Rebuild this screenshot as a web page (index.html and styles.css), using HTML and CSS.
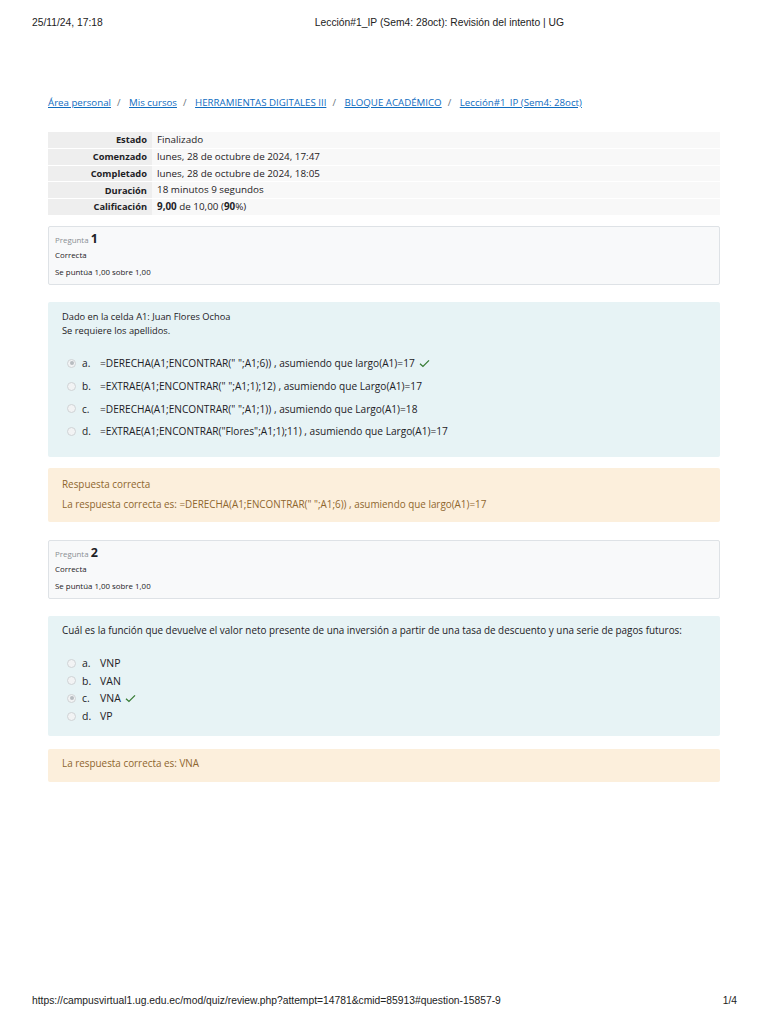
FILE: index.html
```html
<!DOCTYPE html>
<html>
<head>
  <title>Lección#1_IP (Sem4: 28oct): Revisión del intento | UG</title>
  <meta charset="UTF-8">
  <link rel="stylesheet" href="styles.css">
</head>
<body>
  <div class="page">
    <div class="print-header">
      <span>25/11/24, 17:18</span>
      <span class="print-title">Lección#1_IP (Sem4: 28oct): Revisión del intento | UG</span>
    </div>

    <div class="content">
      <nav class="breadcrumb">
        <a href="#">Área personal</a><span class="sep">/</span>
        <a href="#">Mis cursos</a><span class="sep">/</span>
        <a href="#">HERRAMIENTAS DIGITALES III</a><span class="sep">/</span>
        <a href="#">BLOQUE ACADÉMICO</a><span class="sep">/</span>
        <a href="#">Lección#1_IP (Sem4: 28oct)</a>
      </nav>

      <table class="summary">
        <tr><th>Estado</th><td>Finalizado</td></tr>
        <tr><th>Comenzado</th><td>lunes, 28 de octubre de 2024, 17:47</td></tr>
        <tr><th>Completado</th><td>lunes, 28 de octubre de 2024, 18:05</td></tr>
        <tr><th>Duración</th><td>18 minutos 9 segundos</td></tr>
        <tr><th>Calificación</th><td><b>9,00</b> de 10,00 (<b>90</b>%)</td></tr>
      </table>

      <div class="que-info">
        <div class="que-no">Pregunta <span class="qno">1</span></div>
        <div>Correcta</div>
        <div>Se puntúa 1,00 sobre 1,00</div>
      </div>

      <div class="formulation first">
        <p class="qtext">Dado en la celda A1: Juan Flores Ochoa<br>Se requiere los apellidos.</p>
        <div class="answers wide">
          <div class="answer">
            <span class="radio checked"></span><span class="letter">a.</span>
            <span>=DERECHA(A1;ENCONTRAR(" ";A1;6)) , asumiendo que largo(A1)=17</span>
            <svg class="tick" viewBox="0 0 12 10" width="11" height="9"><path d="M1 5.2 L4.3 8.3 L11 1.5" fill="none" stroke="#357a32" stroke-width="1.4"/></svg>
          </div>
          <div class="answer">
            <span class="radio"></span><span class="letter">b.</span>
            <span>=EXTRAE(A1;ENCONTRAR(" ";A1;1);12) , asumiendo que Largo(A1)=17</span>
          </div>
          <div class="answer">
            <span class="radio"></span><span class="letter">c.</span>
            <span>=DERECHA(A1;ENCONTRAR(" ";A1;1)) , asumiendo que Largo(A1)=18</span>
          </div>
          <div class="answer">
            <span class="radio"></span><span class="letter">d.</span>
            <span>=EXTRAE(A1;ENCONTRAR("Flores";A1;1);11) , asumiendo que Largo(A1)=17</span>
          </div>
        </div>
      </div>

      <div class="outcome first">
        <div class="feedback-title">Respuesta correcta</div>
        <div>La respuesta correcta es: =DERECHA(A1;ENCONTRAR(" ";A1;6)) , asumiendo que largo(A1)=17</div>
      </div>

      <div class="que-info second">
        <div class="que-no">Pregunta <span class="qno">2</span></div>
        <div>Correcta</div>
        <div>Se puntúa 1,00 sobre 1,00</div>
      </div>

      <div class="formulation short">
        <p class="qtext">Cuál es la función que devuelve el valor neto presente de una inversión a partir de una tasa de descuento y una serie de pagos futuros:</p>
        <div class="answers">
          <div class="answer"><span class="radio"></span><span class="letter">a.</span><span>VNP</span></div>
          <div class="answer"><span class="radio"></span><span class="letter">b.</span><span>VAN</span></div>
          <div class="answer">
            <span class="radio checked"></span><span class="letter">c.</span><span>VNA</span>
            <svg class="tick" viewBox="0 0 12 10" width="11" height="9"><path d="M1 5.2 L4.3 8.3 L11 1.5" fill="none" stroke="#357a32" stroke-width="1.4"/></svg>
          </div>
          <div class="answer"><span class="radio"></span><span class="letter">d.</span><span>VP</span></div>
        </div>
      </div>

      <div class="outcome single">
        <div>La respuesta correcta es: VNA</div>
      </div>
    </div>

    <div class="print-footer">
      <span>https://campusvirtual1.ug.edu.ec/mod/quiz/review.php?attempt=14781&amp;cmid=85913#question-15857-9</span>
      <span>1/4</span>
    </div>
  </div>
</body>
</html>
```

FILE: styles.css
```css
:root {
  --link-color: #0f6cbf;
  --info-bg: #f8f9fa;
  --info-border: #dee2e6;
  --formulation-bg: #e7f3f5;
  --outcome-bg: #fcefdc;
  --outcome-text: #8e662e;
}

body {
  margin: 0;
  background-color: white;
  color: #1d2125;
  font-family: 'Open Sans', 'Noto Sans', sans-serif;
}

.page {
  display: flex;
  flex-direction: column;
  height: 1024px;
}

.print-header,
.print-footer {
  display: flex;
  font-family: 'Liberation Sans', Arial, sans-serif;
  font-size: 10.3px;
  color: #222;
  padding: 0 32px;
}

.print-header {
  padding-top: 17px;
}

.print-title {
  margin-left: 212px;
}

.print-footer {
  justify-content: space-between;
  margin-top: auto;
  padding-right: 31px;
  padding-bottom: 18px;
}

.content {
  padding: 0 48px;
  font-size: 9.3px;
}

.breadcrumb {
  margin-top: 68px;
  font-size: 9.7px;
}

.breadcrumb a {
  color: var(--link-color);
  text-decoration: underline;
}

.breadcrumb .sep {
  color: #6a737b;
  margin: 0 6px;
}

.summary {
  width: 100%;
  margin-top: 22px;
  border-collapse: collapse;
}

.summary th,
.summary td {
  height: 15.8px;
  padding: 0 5px;
  border-top: 1px solid white;
  line-height: 1;
}

.summary th {
  width: 94px;
  text-align: right;
  background-color: #eeeeee;
  font-size: 9.3px;
  font-weight: 700;
}

.summary td {
  background-color: #f8f8f8;
  font-size: 9.85px;
}

.que-info {
  margin-top: 11px;
  padding: 3px 6px;
  background-color: var(--info-bg);
  border: 1px solid var(--info-border);
  border-radius: 2px;
  font-size: 7.9px;
  line-height: 17px;
}

.que-info.second {
  margin-top: 18px;
}

.que-no {
  color: #8a8f94;
  height: 17px;
}

.qno {
  color: #1d2125;
  font-size: 12.5px;
  font-weight: 700;
}

.formulation {
  padding: 0 14px;
  background-color: var(--formulation-bg);
  border-radius: 2px;
}

.qtext {
  margin: 0;
  line-height: 14px;
}

.formulation.first {
  margin-top: 17px;
  padding-top: 8px;
  padding-bottom: 14.5px;
}

.formulation.short {
  margin-top: 17px;
  padding-top: 7px;
  padding-bottom: 11px;
}

.formulation.short .qtext {
  font-size: 9.9px;
}

.answers {
  display: flex;
  flex-direction: column;
  margin-top: 17px;
  padding-left: 5px;
  font-size: 10.5px;
}

.answers .answer {
  display: flex;
  align-items: center;
  height: 17.7px;
}

.answers.wide {
  margin-top: 14px;
  font-size: 10.15px;
}

.answers.wide .answer {
  height: 22.7px;
}

.radio {
  width: 7px;
  height: 7px;
  border: 1px solid #cfd3d6;
  border-radius: 50%;
  background-color: #f2f3f4;
  margin-right: 6px;
  display: flex;
  align-items: center;
  justify-content: center;
}

.radio.checked::after {
  content: "";
  width: 4px;
  height: 4px;
  border-radius: 50%;
  background-color: #b7bcc0;
}

.letter {
  width: 18px;
}

.tick {
  margin-left: 4px;
}

.outcome {
  padding: 0 14px;
  background-color: var(--outcome-bg);
  color: var(--outcome-text);
  border-radius: 2px;
  font-size: 9.9px;
  line-height: 14px;
}

.outcome.first {
  margin-top: 11px;
  padding-top: 9px;
  padding-bottom: 11px;
}

.outcome .feedback-title {
  margin-bottom: 6px;
}

.outcome.single {
  margin-top: 13px;
  padding-top: 7px;
  padding-bottom: 12px;
}
```
